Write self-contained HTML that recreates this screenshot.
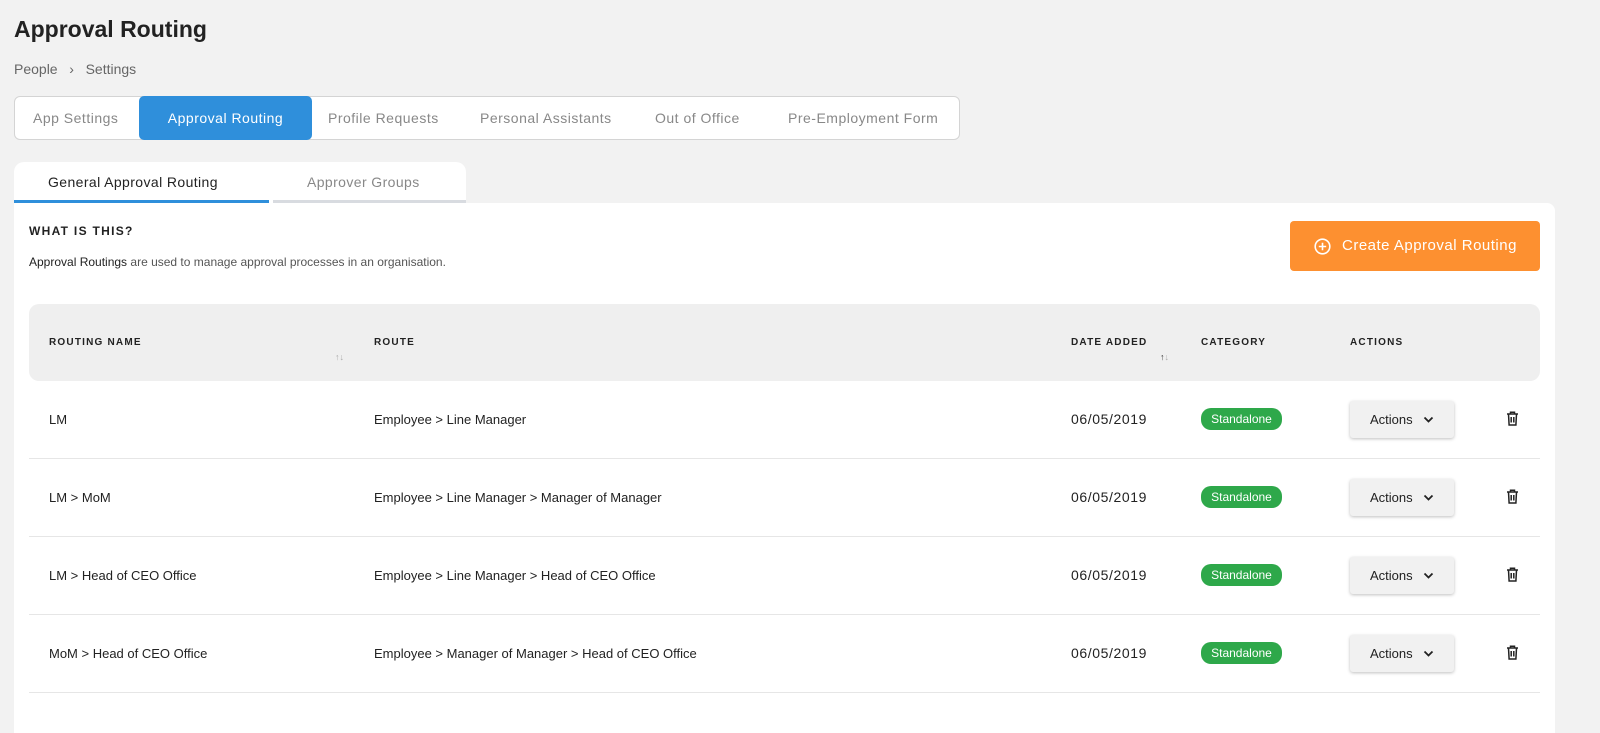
<!DOCTYPE html>
<html><head><style>
*{box-sizing:border-box;margin:0;padding:0}
body{width:1600px;height:721px;overflow:hidden;background:#f2f2f2;font-family:"Liberation Sans",sans-serif;color:#222;position:relative}
.abs{position:absolute}
h1{position:absolute;left:14px;top:16px;font-size:23px;font-weight:bold;color:#222}
.bc{left:14px;top:61px;font-size:14px;color:#666}
.tabs{left:14px;top:96px;width:946px;height:44px;background:#fff;border:1px solid #d4d4d4;border-radius:6px}
.tabs span{position:absolute;top:13px;font-size:14px;color:#888;letter-spacing:.5px}
.tabs .act{left:124px;top:-1px;width:173px;height:44px;background:#2f8fdb;border-radius:5px;color:#fff;text-align:center;line-height:44px}
.st{left:14px;top:162px;width:452px;height:42px;background:#fff;border-radius:10px 10px 0 0}
.panel{left:14px;top:203px;width:1541px;height:530px;background:#fff;border-radius:0 8px 0 0}
.hdr{left:29px;top:304px;width:1511px;height:77px;background:#efefef;border-radius:10px}
.th{font-size:10px;font-weight:bold;letter-spacing:1.2px;color:#222;top:337px}
.cell{font-size:13px;color:#222}
.badge{background:#2ea84a;color:#fff;font-size:12px;border-radius:10px;width:81px;height:22px;line-height:22px;text-align:center}
.btn{width:104px;height:37px;background:#f1f1f1;box-shadow:0 1px 3px rgba(0,0,0,.25);border-radius:3px;font-size:13px;line-height:37px;padding-left:20px}
.sep{left:29px;width:1511px;height:1px;background:#e6e6e6}
</style></head><body>
<h1>Approval Routing</h1>
<div class="abs bc">People &nbsp;&nbsp;›&nbsp;&nbsp; Settings</div>
<div class="abs tabs">
<span style="left:18px">App Settings</span>
<span class="act">Approval Routing</span>
<span style="left:313px">Profile Requests</span>
<span style="left:465px">Personal Assistants</span>
<span style="left:640px">Out of Office</span>
<span style="left:773px">Pre-Employment Form</span>
</div>
<div class="abs st">
<span class="abs" style="left:34px;top:12px;font-size:14px;color:#222;letter-spacing:.4px">General Approval Routing</span>
<span class="abs" style="left:293px;top:12px;font-size:14px;color:#888;letter-spacing:.4px">Approver Groups</span>
</div>
<div class="abs panel"></div>
<div class="abs" style="left:14px;top:200px;width:255px;height:3px;background:#2f8fdb"></div>
<div class="abs" style="left:273px;top:200px;width:193px;height:3px;background:#d8dbe0"></div>
<div class="abs" style="left:29px;top:224px;font-size:12px;font-weight:bold;letter-spacing:1.3px">WHAT IS THIS?</div>
<div class="abs" style="left:29px;top:255px;font-size:12px;color:#555"><span style="color:#222">Approval Routings</span> are used to manage approval processes in an organisation.</div>
<div class="abs" style="left:1290px;top:221px;width:250px;height:50px;background:#fd9030;border-radius:4px;color:#fff;font-size:15px;letter-spacing:.5px;line-height:50px;padding-left:52px">Create Approval Routing
<svg class="abs" style="left:24px;top:17px" width="17" height="17" viewBox="0 0 17 17"><circle cx="8.5" cy="8.5" r="7.3" fill="none" stroke="#fff" stroke-width="1.6"/><path d="M8.5 4.8v7.4M4.8 8.5h7.4" stroke="#fff" stroke-width="1.6"/></svg></div>
<div class="abs hdr"></div>
<div class="abs th" style="left:49px">ROUTING NAME</div>
<div class="abs th" style="left:374px">ROUTE</div>
<div class="abs th" style="left:1071px">DATE ADDED</div>
<div class="abs th" style="left:1201px">CATEGORY</div>
<div class="abs th" style="left:1350px">ACTIONS</div>
<div class="abs" style="left:335px;top:352px;font-size:9px;color:#aaa">↑↓</div>
<div class="abs" style="left:1160px;top:352px;font-size:9px;color:#aaa"><span style="color:#333">↑</span>↓</div>

<div class="abs cell" style="left:49px;top:412px">LM</div>
<div class="abs cell" style="left:374px;top:412px">Employee &gt; Line Manager</div>
<div class="abs cell" style="left:49px;top:490px">LM &gt; MoM</div>
<div class="abs cell" style="left:374px;top:490px">Employee &gt; Line Manager &gt; Manager of Manager</div>
<div class="abs cell" style="left:49px;top:568px">LM &gt; Head of CEO Office</div>
<div class="abs cell" style="left:374px;top:568px">Employee &gt; Line Manager &gt; Head of CEO Office</div>
<div class="abs cell" style="left:49px;top:646px">MoM &gt; Head of CEO Office</div>
<div class="abs cell" style="left:374px;top:646px">Employee &gt; Manager of Manager &gt; Head of CEO Office</div>

<div class="abs sep" style="top:458px"></div>
<div class="abs sep" style="top:536px"></div>
<div class="abs sep" style="top:614px"></div>
<div class="abs sep" style="top:692px"></div>

<div class="abs" id="rows"></div>
<script>
[419,497,575,653].forEach(function(y){
document.body.insertAdjacentHTML('beforeend',
'<div class="abs cell" style="left:1071px;top:'+(y-8)+'px;font-size:14px;letter-spacing:.6px">06/05/2019</div>'+
'<div class="abs badge" style="left:1201px;top:'+(y-11)+'px">Standalone</div>'+
'<div class="abs btn" style="left:1350px;top:'+(y-18)+'px">Actions<svg class="abs" style="left:73px;top:15px" width="11" height="8" viewBox="0 0 11 8"><path d="M1.5 1.5l4 4 4-4" fill="none" stroke="#222" stroke-width="1.8"/></svg></div>'+
'<svg class="abs" style="left:1506px;top:'+(y-8)+'px" width="13" height="15" viewBox="0 0 13 15"><path d="M1 3h11M4.5 3V1.2h4V3M2.5 3l.6 11h6.8l.6-11M5.2 6v5.5M7.8 6v5.5" fill="none" stroke="#222" stroke-width="1.5"/></svg>');
});
</script>
</body></html>
